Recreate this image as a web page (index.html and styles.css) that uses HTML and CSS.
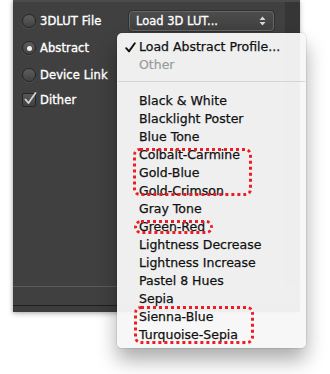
FILE: index.html
```html
<!DOCTYPE html>
<html>
<head>
<meta charset="utf-8">
<link rel="stylesheet" href="styles.css">
</head>
<body>
<div class="stage">
  <div class="panel">
    <div class="panel-top"></div>
    <div class="panel-body">
      <div class="options">
        <div class="row">
          <span class="radio"></span><span class="label">3DLUT File</span>
          <div class="popup">
            <span class="popup-text">Load 3D LUT...</span>
            <svg class="popup-arrows" width="7" height="10" viewBox="0 0 7 10"><path d="M3.5 0.5 L6.5 4 H0.5 Z M3.5 9.5 L6.5 6 H0.5 Z" fill="#d8d8d8"/></svg>
          </div>
        </div>
        <div class="row"><span class="radio on"></span><span class="label">Abstract</span></div>
        <div class="row"><span class="radio"></span><span class="label">Device Link</span></div>
        <div class="row row-check">
          <span class="check"><svg width="16" height="16" viewBox="0 0 16 16"><path d="M3.5 8.5 L6.5 12 L13.5 2" fill="none" stroke="#d4d4d4" stroke-width="1.8" stroke-linecap="round" stroke-linejoin="round"/></svg></span>
          <span class="label">Dither</span>
        </div>
      </div>
      <div class="track"></div>
    </div>
    <div class="bar"></div>
    <div class="bar-bottom"></div>
  </div>

  <div class="menu">
    <div class="item"><span class="mark"><svg width="11" height="11" viewBox="0 0 11 11"><path d="M1.2 6.2 L4 9.4 L9.8 1.2" fill="none" stroke="#111" stroke-width="1.9" stroke-linecap="round" stroke-linejoin="round"/></svg></span><span>Load Abstract Profile...</span></div>
    <div class="item item-disabled"><span class="mark"></span><span>Other</span></div>
    <div class="sep"></div>
    <div class="item"><span class="mark"></span><span>Black &amp; White</span></div>
    <div class="item"><span class="mark"></span><span>Blacklight Poster</span></div>
    <div class="item"><span class="mark"></span><span>Blue Tone</span></div>
    <div class="item"><span class="mark"></span><span>Colbalt-Carmine</span></div>
    <div class="item"><span class="mark"></span><span>Gold-Blue</span></div>
    <div class="item"><span class="mark"></span><span>Gold-Crimson</span></div>
    <div class="item"><span class="mark"></span><span>Gray Tone</span></div>
    <div class="item"><span class="mark"></span><span>Green-Red</span></div>
    <div class="item"><span class="mark"></span><span>Lightness Decrease</span></div>
    <div class="item"><span class="mark"></span><span>Lightness Increase</span></div>
    <div class="item"><span class="mark"></span><span>Pastel 8 Hues</span></div>
    <div class="item"><span class="mark"></span><span>Sepia</span></div>
    <div class="item"><span class="mark"></span><span>Sienna-Blue</span></div>
    <div class="item"><span class="mark"></span><span>Turquoise-Sepia</span></div>

    <div class="note note-1"></div>
    <div class="note note-2"></div>
    <div class="note note-3"></div>
  </div>
</div>
</body>
</html>
```

FILE: styles.css
```css
html, body {
  margin: 0;
  padding: 0;
  background: #ffffff;
}

.stage {
  position: relative;
  width: 330px;
  height: 374px;
  overflow: hidden;
  background: #ffffff;
  font-family: "DejaVu Sans", "Liberation Sans", sans-serif;
}

.panel {
  margin-left: 13px;
  width: 287px;
  height: 312px;
  display: flex;
  flex-direction: column;
  background: #404040;
  box-shadow: 0 2px 5px rgba(0, 0, 0, 0.25), -1px 0 3px rgba(0, 0, 0, 0.12);
}

.panel-top {
  height: 2px;
  background: #4b4b4b;
}

.panel-body {
  flex: 1;
  display: flex;
  border-bottom: 1px solid #5a5a5a;
}

.options {
  flex: 1;
  display: flex;
  flex-direction: column;
  gap: 5px;
  padding: 8px 0 0 9px;
}

.row {
  height: 22px;
  display: flex;
  align-items: center;
}

.row-check {
  margin-top: -2px;
}

.label {
  margin-left: 4px;
  color: #ffffff;
  font-size: 11.5px;
  letter-spacing: 0.1px;
  -webkit-text-stroke: 0.35px #ffffff;
}

.radio {
  width: 14px;
  height: 14px;
  box-sizing: border-box;
  border-radius: 50%;
  border: 1px solid #262626;
  background: linear-gradient(#5e5e5e, #424242);
  box-shadow: 0 1px 0 rgba(255, 255, 255, 0.08);
  display: flex;
  align-items: center;
  justify-content: center;
}

.radio.on::after {
  content: "";
  width: 5px;
  height: 5px;
  border-radius: 50%;
  background: #f0f0f0;
}

.check {
  width: 14px;
  height: 14px;
  box-sizing: border-box;
  border-radius: 2px;
  border: 1px solid #262626;
  background: linear-gradient(#585858, #404040);
  position: relative;
}

.check svg {
  position: absolute;
  left: -1px;
  top: -3px;
}

.popup {
  margin-left: auto;
  margin-right: 11px;
  width: 145px;
  height: 20px;
  box-sizing: border-box;
  border: 1px solid #666666;
  border-radius: 4px;
  background: linear-gradient(#4c4c4c, #404040);
  box-shadow: 0 0 0 1px rgba(0, 0, 0, 0.25);
  display: flex;
  align-items: center;
  padding: 0 7px 0 6px;
}

.popup-text {
  flex: 1;
  color: #ffffff;
  font-size: 11.5px;
  -webkit-text-stroke: 0.3px #ffffff;
}

.track {
  width: 15px;
  background: #363636;
}

.bar {
  height: 18px;
  border-bottom: 1px solid #1f1f1f;
}

.bar-bottom {
  height: 6px;
  background: #3c3c3c;
}

.menu {
  position: absolute;
  left: 117px;
  top: 33px;
  width: 189px;
  height: 315px;
  box-sizing: border-box;
  padding: 5px 0 4px;
  border-radius: 5px;
  background: rgba(247, 247, 247, 0.955);
  box-shadow: 0 12px 20px rgba(0, 0, 0, 0.33), 0 0 0 1px rgba(0, 0, 0, 0.07);
}

.item {
  height: 18px;
  line-height: 18px;
  display: flex;
  align-items: center;
  font-size: 12.5px;
  color: #111111;
  white-space: nowrap;
  -webkit-text-stroke: 0.25px #111111;
}

.item-disabled {
  color: #9b9b9b;
  -webkit-text-stroke: 0.2px #9b9b9b;
}

.mark {
  width: 14px;
  padding-left: 8px;
  display: flex;
  align-items: center;
}

.sep {
  height: 1px;
  margin: 7px 1px 10px;
  background: #d5d5d5;
}

.note {
  position: absolute;
  box-sizing: border-box;
  border: 3px dotted #ee1d25;
  border-radius: 7px;
}

.note-1 {
  left: 16px;
  top: 115px;
  width: 119px;
  height: 48px;
}

.note-2 {
  left: 17px;
  top: 187px;
  width: 79px;
  height: 14px;
}

.note-3 {
  left: 17px;
  top: 273px;
  width: 120px;
  height: 38px;
}
```
